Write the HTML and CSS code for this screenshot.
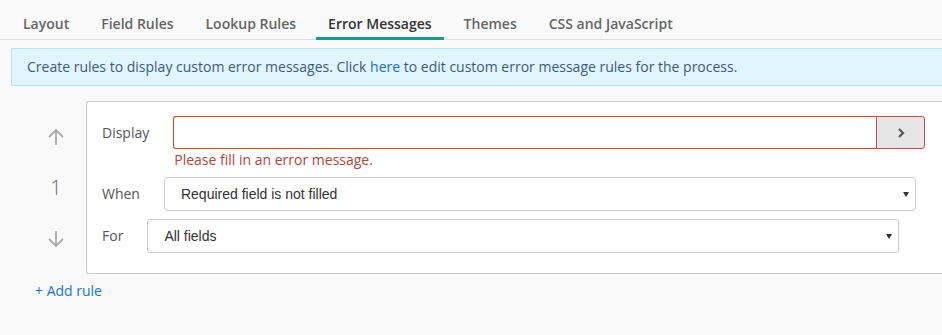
FILE: index.html
```html
<!DOCTYPE html>
<html lang="en">
<head>
  <meta charset="UTF-8">
  <meta name="viewport" content="width=device-width, initial-scale=1.0">
  <title>Error Messages</title>
  <link rel="stylesheet" href="styles.css">
</head>
<body>
  <div class="page">
    <nav class="tabs">
      <a href="#">Layout</a>
      <a href="#">Field Rules</a>
      <a href="#">Lookup Rules</a>
      <a href="#" class="active">Error Messages</a>
      <a href="#">Themes</a>
      <a href="#">CSS and JavaScript</a>
    </nav>

    <div class="alert">
      Create rules to display custom error messages. Click <a href="#">here</a> to edit custom error message rules for the process.
    </div>

    <div class="rule">
      <div class="rule-side">
        <svg class="move" width="18" height="18" viewBox="0 0 18 18"><path d="M9 17V2M2 9l7-7 7 7" /></svg>
        <div class="rule-num">1</div>
        <svg class="move" width="18" height="18" viewBox="0 0 18 18"><path d="M9 1v15M2 9l7 7 7-7" /></svg>
      </div>

      <div class="card">
        <div class="row">
          <label>Display</label>
          <div class="field">
            <div class="input-group">
              <input type="text" class="input error">
              <button class="btn-go">
                <svg width="10" height="12" viewBox="0 0 10 12"><path d="M3 2l4 4-4 4" /></svg>
              </button>
            </div>
            <div class="help">Please fill in an error message.</div>
          </div>
        </div>
        <div class="row">
          <label>When</label>
          <div class="select">
            <select>
              <option>Required field is not filled</option>
            </select>
          </div>
        </div>
        <div class="row">
          <label>For</label>
          <div class="select">
            <select>
              <option>All fields</option>
            </select>
          </div>
        </div>
      </div>
    </div>

    <a href="#" class="add-rule">+ Add rule</a>
  </div>
</body>
</html>
```

FILE: styles.css
```css
body {
  margin: 0;
  padding: 0;
  background-color: #f9f9f9;
  font-family: 'Open Sans', sans-serif;
  font-size: 14px;
  color: #555;
  overflow: hidden;
}

.page {
  padding-left: 11px;
}

.tabs {
  display: flex;
  gap: 8px;
  height: 39px;
  border-bottom: 1px solid #ddd;
  margin-left: -11px;
  padding-left: 11px;
}

.tabs a {
  padding: 14px 12px 0;
  color: #666;
  font-weight: 600;
  text-decoration: none;
  border-bottom: 3px solid transparent;
  margin-bottom: -1px;
  box-sizing: border-box;
}

.tabs a.active {
  color: #333;
  border-bottom-color: #1a9c80;
}

.alert {
  margin-top: 8px;
  padding: 8px 15px;
  line-height: 20px;
  background-color: #e1f5fe;
  border: 1px solid #b3e3f7;
  border-right: none;
  border-radius: 2px 0 0 2px;
  color: #3d5a78;
}

.alert a {
  color: #1a6fc4;
  text-decoration: none;
}

.rule {
  display: flex;
  margin-top: 15px;
}

.rule-side {
  width: 60px;
  padding-left: 15px;
  display: flex;
  flex-direction: column;
  align-items: center;
  justify-content: center;
  gap: 33px;
}

.move {
  fill: none;
  stroke: #aaa;
  stroke-width: 1.8;
}

.rule-num {
  font-size: 20px;
  font-weight: 300;
  color: #666;
  line-height: 18px;
}

.card {
  flex: 1;
  background-color: #fff;
  border: 1px solid #ccc;
  border-right: none;
  border-radius: 3px 0 0 3px;
  padding: 14px 0 20px 15px;
  display: flex;
  flex-direction: column;
  gap: 8px;
}

.row {
  display: flex;
  align-items: flex-start;
}

.row label {
  margin-right: 24px;
  line-height: 33px;
  color: #555;
}

.field {
  width: 752px;
}

.input-group {
  display: flex;
  height: 33px;
}

.input {
  flex: 1;
  box-sizing: border-box;
  height: 33px;
  border: 1px solid #d9441c;
  border-right: none;
  border-radius: 3px 0 0 3px;
  background: #fff;
  outline: none;
}

.btn-go {
  width: 49px;
  height: 33px;
  background-color: #e6e6e6;
  border: 1px solid #c0504d;
  border-radius: 0 3px 3px 0;
  display: flex;
  align-items: center;
  justify-content: center;
  padding: 0;
}

.btn-go svg {
  fill: none;
  stroke: #555;
  stroke-width: 2.2;
}

.help {
  margin-top: 1px;
  padding-left: 1px;
  font-size: 14px;
  line-height: 19px;
  color: #b0453c;
}

.select {
  position: relative;
  width: 752px;
}

.select select {
  width: 100%;
  height: 34px;
  padding: 0 16px;
  border: 1px solid #ccc;
  border-radius: 3px;
  background-color: #fff;
  font-family: 'Liberation Sans', Arial, sans-serif;
  font-size: 14px;
  color: #333;
  appearance: none;
  -webkit-appearance: none;
}

.select::after {
  content: '';
  position: absolute;
  right: 7px;
  top: 15px;
  border-left: 3px solid transparent;
  border-right: 3px solid transparent;
  border-top: 5px solid #333;
}

.add-rule {
  display: inline-block;
  margin-top: 7px;
  margin-left: 24px;
  line-height: 20px;
  color: #1a73c8;
  text-decoration: none;
}
```
